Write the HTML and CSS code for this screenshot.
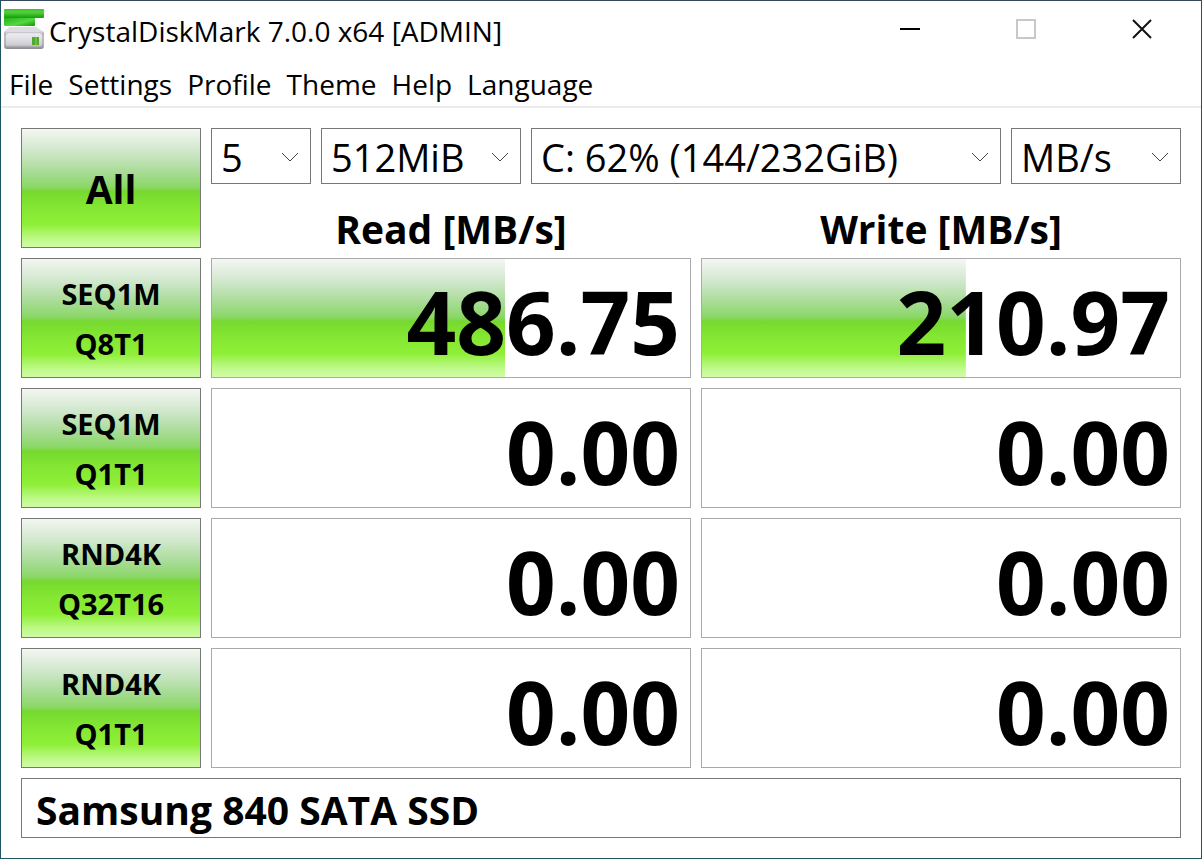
FILE: index.html
```html
<!DOCTYPE html>
<html lang="en">
<head>
<meta charset="utf-8">
<title>CrystalDiskMark 7.0.0 x64 [ADMIN]</title>
<link rel="stylesheet" href="styles.css">
</head>
<body>
<div class="window">
  <header class="titlebar">
    <svg class="logo" viewBox="0 0 40 40" aria-hidden="true">
      <defs>
        <linearGradient id="green" x1="0" y1="0" x2="0" y2="1">
          <stop offset="0" stop-color="#3cbf28"/><stop offset=".35" stop-color="#55d23c"/><stop offset="1" stop-color="#149c0e"/>
        </linearGradient>
        <linearGradient id="mint" x1="0" y1="0" x2="1" y2="1">
          <stop offset="0" stop-color="#1fae16"/><stop offset=".6" stop-color="#55d83f"/><stop offset="1" stop-color="#12930d"/>
        </linearGradient>
        <linearGradient id="metal" x1="0" y1="0" x2="0" y2="1">
          <stop offset="0" stop-color="#efeff1"/><stop offset=".25" stop-color="#c9c8ce"/><stop offset=".4" stop-color="#e9e8ec"/><stop offset=".8" stop-color="#cfced4"/><stop offset="1" stop-color="#85848b"/>
        </linearGradient>
      </defs>
      <path d="M5 18h27l8 5v14q0 3-3 3H3q-3 0-3-3V23z" fill="url(#metal)"/>
      <path d="M6 18h26l6 5H2z" fill="#dddce1"/>
      <path d="M1 24v12q0 3 3 3h32q3 0 3-3V24" fill="none" stroke="#929198" stroke-width="1"/>
      <path d="M4 25h32" stroke="#f7f7f9" stroke-width="1"/>
      <rect y="8" width="31" height="9" rx="1" fill="url(#mint)"/>
      <rect y="0" width="40" height="9" rx="1" fill="url(#green)"/>
      <rect x="28" y="28" width="7" height="8" fill="#51a92e"/>
      <path d="M32 28v8" stroke="#8bcf63" stroke-width="1"/>
    </svg>
    <h1 class="title">CrystalDiskMark 7.0.0 x64 [ADMIN]</h1>
    <div class="controls">
      <button class="control" type="button" aria-label="Minimize"><svg viewBox="0 0 20 20"><path d="M0 10h20" stroke="#000" stroke-width="2"/></svg></button>
      <button class="control" type="button" aria-label="Maximize" disabled><svg viewBox="0 0 20 20"><path d="M1 1h18v18H1z" fill="none" stroke="#c8c8c8" stroke-width="2"/></svg></button>
      <button class="control" type="button" aria-label="Close"><svg viewBox="0 0 20 20"><path d="M1 1l18 18M19 1L1 19" stroke="#111" stroke-width="2"/></svg></button>
    </div>
  </header>
  <nav class="menu">
    <button type="button">File</button>
    <button type="button">Settings</button>
    <button type="button">Profile</button>
    <button type="button">Theme</button>
    <button type="button">Help</button>
    <button type="button">Language</button>
  </nav>
  <main class="content">
    <table class="bench">
      <thead>
        <tr>
          <td class="all"><button class="run run-all" type="button">All</button></td>
          <td class="options">
            <label class="pick count"><select aria-label="Test count"><option>5</option></select><svg viewBox="0 0 18 10"><path d="M1 1l8 8 8-8"/></svg></label>
            <label class="pick size"><select aria-label="Test size"><option>512MiB</option></select><svg viewBox="0 0 18 10"><path d="M1 1l8 8 8-8"/></svg></label>
            <label class="pick drive"><select aria-label="Drive"><option>C: 62% (144/232GiB)</option></select><svg viewBox="0 0 18 10"><path d="M1 1l8 8 8-8"/></svg></label>
            <label class="pick unit"><select aria-label="Unit"><option>MB/s</option></select><svg viewBox="0 0 18 10"><path d="M1 1l8 8 8-8"/></svg></label>
          </td>
          <th class="heading" scope="col">Read [MB/s]</th>
          <th class="heading" scope="col">Write [MB/s]</th>
        </tr>
      </thead>
      <tbody>
        <tr>
          <th scope="row"><button class="run" type="button">SEQ1M<br>Q8T1</button></th>
          <td class="score filled" style="--level: 61.3%">486.75</td>
          <td class="score filled" style="--level: 55.2%">210.97</td>
        </tr>
        <tr>
          <th scope="row"><button class="run" type="button">SEQ1M<br>Q1T1</button></th>
          <td class="score">0.00</td>
          <td class="score">0.00</td>
        </tr>
        <tr>
          <th scope="row"><button class="run" type="button">RND4K<br>Q32T16</button></th>
          <td class="score">0.00</td>
          <td class="score">0.00</td>
        </tr>
        <tr>
          <th scope="row"><button class="run" type="button">RND4K<br>Q1T1</button></th>
          <td class="score">0.00</td>
          <td class="score">0.00</td>
        </tr>
      </tbody>
    </table>
    <input class="comment" type="text" aria-label="Comment" value="Samsung 840 SATA SSD">
  </main>
</div>
</body>
</html>
```
FILE: styles.css
```css
* {
  box-sizing: border-box;
}

:root {
  --meter: linear-gradient(#f4f7f3 0%, #d3e8cf 18%, #a9dc98 36%, #8bd768 49%, #76d92e 53%, #84e733 66%, #8eef36 80%, #bdf987 92%, #d2fba8 100%);
}

body {
  margin: 0;
  background: #fff;
  color: #000;
  font-family: "Open Sans", "Noto Sans", sans-serif;
}

button,
select,
input {
  font: inherit;
  color: inherit;
  margin: 0;
}

.window {
  display: flex;
  flex-direction: column;
  min-height: 100vh;
  border: 1px solid #1f5561;
  border-top-color: #34495a;
}

.titlebar {
  display: flex;
  height: 60px;
  padding-left: 3px;
}

.logo {
  width: 40px;
  height: 40px;
  margin-top: 8px;
}

.title {
  flex: 1;
  margin: 0;
  padding-left: 5px;
  font-size: 28px;
  font-weight: 400;
  line-height: 60px;
}

.controls {
  display: flex;
  padding-right: 1px;
}

.control {
  width: 116px;
  height: 56px;
  padding: 0;
  border: 0;
  background: none;
}

.control svg {
  display: block;
  width: 20px;
  height: 20px;
  margin: auto;
}

.menu {
  display: flex;
  gap: 15px;
  height: 47px;
  padding: 0 8px;
  border-bottom: 2px solid #ebebeb;
}

.menu button {
  padding: 0;
  border: 0;
  background: none;
  font-size: 28px;
  line-height: 44px;
}

.content {
  display: flex;
  flex-direction: column;
  gap: 10px;
  padding: 20px;
}

.bench {
  display: grid;
  grid-template-columns: 180px 1fr 1fr;
  grid-template-rows: 56px 54px repeat(4, 120px);
  gap: 10px;
}

.bench thead,
.bench tbody,
.bench tr {
  display: contents;
}

.bench th,
.bench td {
  display: block;
  padding: 0;
}

.bench .all {
  grid-row: span 2;
}

.bench .options {
  display: flex;
  gap: 10px;
  grid-column: span 2;
}

.run {
  display: block;
  width: 100%;
  height: 100%;
  padding: 2px 0 0;
  border: 1px solid #777;
  background: var(--meter) border-box;
  font-size: 29px;
  font-weight: 700;
  line-height: 50px;
}

.run-all {
  font-size: 39px;
}

.pick {
  position: relative;
}

.pick select {
  width: 100%;
  height: 56px;
  padding: 2px 9px 0;
  border: 1px solid #777;
  border-radius: 0;
  appearance: none;
  background: #fff;
  font-size: 38px;
}

.pick svg {
  position: absolute;
  top: 24px;
  right: 12px;
  width: 18px;
  height: 10px;
  fill: none;
  stroke: #444;
  pointer-events: none;
}

.count {
  width: 100px;
}

.size {
  width: 200px;
}

.drive {
  flex: 1;
}

.unit {
  width: 170px;
}

.heading {
  font-size: 39px;
  font-weight: 700;
  line-height: 70px;
  text-align: center;
}

.bench .score {
  padding: 2px 10px 0 0;
  border: 1px solid #aaa;
  font-size: 87px;
  font-weight: 700;
  line-height: 120px;
  text-align: right;
}

.bench .filled {
  background: var(--meter) left / var(--level) 100% no-repeat;
}

.comment {
  width: 100%;
  height: 60px;
  padding: 2px 14px 0;
  border: 1px solid #777;
  font-size: 39px;
  font-weight: 700;
}
```
